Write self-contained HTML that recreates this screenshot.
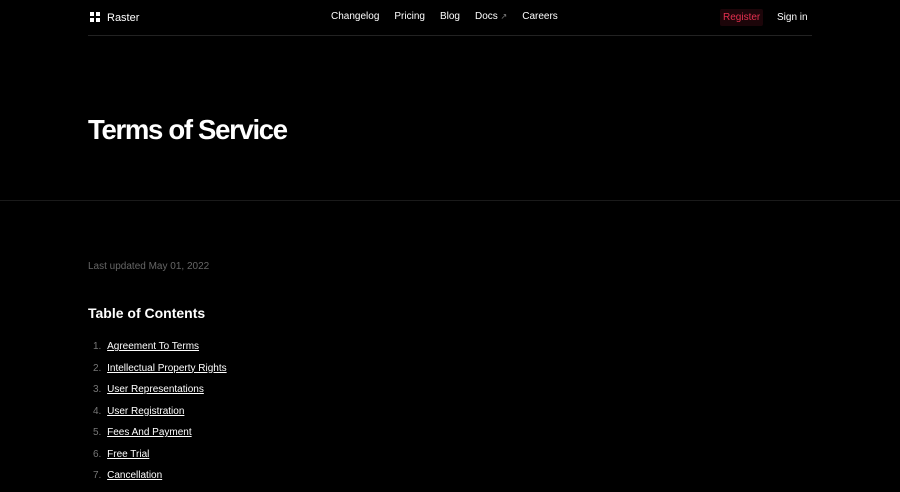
<!DOCTYPE html>
<html><head><style>
*{margin:0;padding:0;box-sizing:border-box}
html,body{width:900px;height:484px;overflow:hidden;background:#000;color:#fff;font-family:"Liberation Sans",sans-serif}
.nav{position:absolute;left:88px;right:88px;top:0;height:36px;border-bottom:1px solid #222}
.logo{position:absolute;left:2px;top:12px;font-size:11px}
.logo i{display:inline-block;width:10px;height:10px;vertical-align:-1px;margin-right:7px;background:
linear-gradient(#fff,#fff) 0 0/4px 4px no-repeat,linear-gradient(#fff,#fff) 6px 0/4px 4px no-repeat,linear-gradient(#fff,#fff) 0 6px/4px 4px no-repeat,linear-gradient(#fff,#fff) 6px 6px/4px 4px no-repeat}
.links{position:absolute;left:243px;top:11px;font-size:10px;white-space:nowrap}
.links span{margin-right:15px}
.reg{position:absolute;left:632px;top:9px;padding:3px 3px;background:#1c0509;color:#e5304f;font-size:10px;border-radius:2px}
.sign{position:absolute;left:689px;top:12px;font-size:10px}
h1{position:absolute;left:88px;top:114px;font-size:27.5px;font-weight:bold;letter-spacing:-1.3px}
.hr{position:absolute;left:0;right:0;top:200px;border-top:1px solid #1a1a1a}
.upd{position:absolute;left:88px;top:261px;font-size:10px;color:#666}
h2{position:absolute;left:88px;top:305px;font-size:14px;font-weight:bold}
ol{position:absolute;left:93px;top:341px;list-style:none;font-size:10px}
li{height:21.5px;color:#777}
li a{color:#fff;text-decoration:underline;margin-left:3px}
</style></head><body>
<div class="nav">
<div class="logo"><i></i>Raster</div>
<div class="links"><span>Changelog</span><span>Pricing</span><span>Blog</span><span>Docs <small style="color:#888;font-size:8px">↗</small></span><span>Careers</span></div>
<div class="reg">Register</div>
<div class="sign">Sign in</div>
</div>
<h1>Terms of Service</h1>
<div class="hr"></div>
<div class="upd">Last updated May 01, 2022</div>
<h2>Table of Contents</h2>
<ol>
<li>1. <a>Agreement To Terms</a></li>
<li>2. <a>Intellectual Property Rights</a></li>
<li>3. <a>User Representations</a></li>
<li>4. <a>User Registration</a></li>
<li>5. <a>Fees And Payment</a></li>
<li>6. <a>Free Trial</a></li>
<li>7. <a>Cancellation</a></li>
</ol>
</body></html>
